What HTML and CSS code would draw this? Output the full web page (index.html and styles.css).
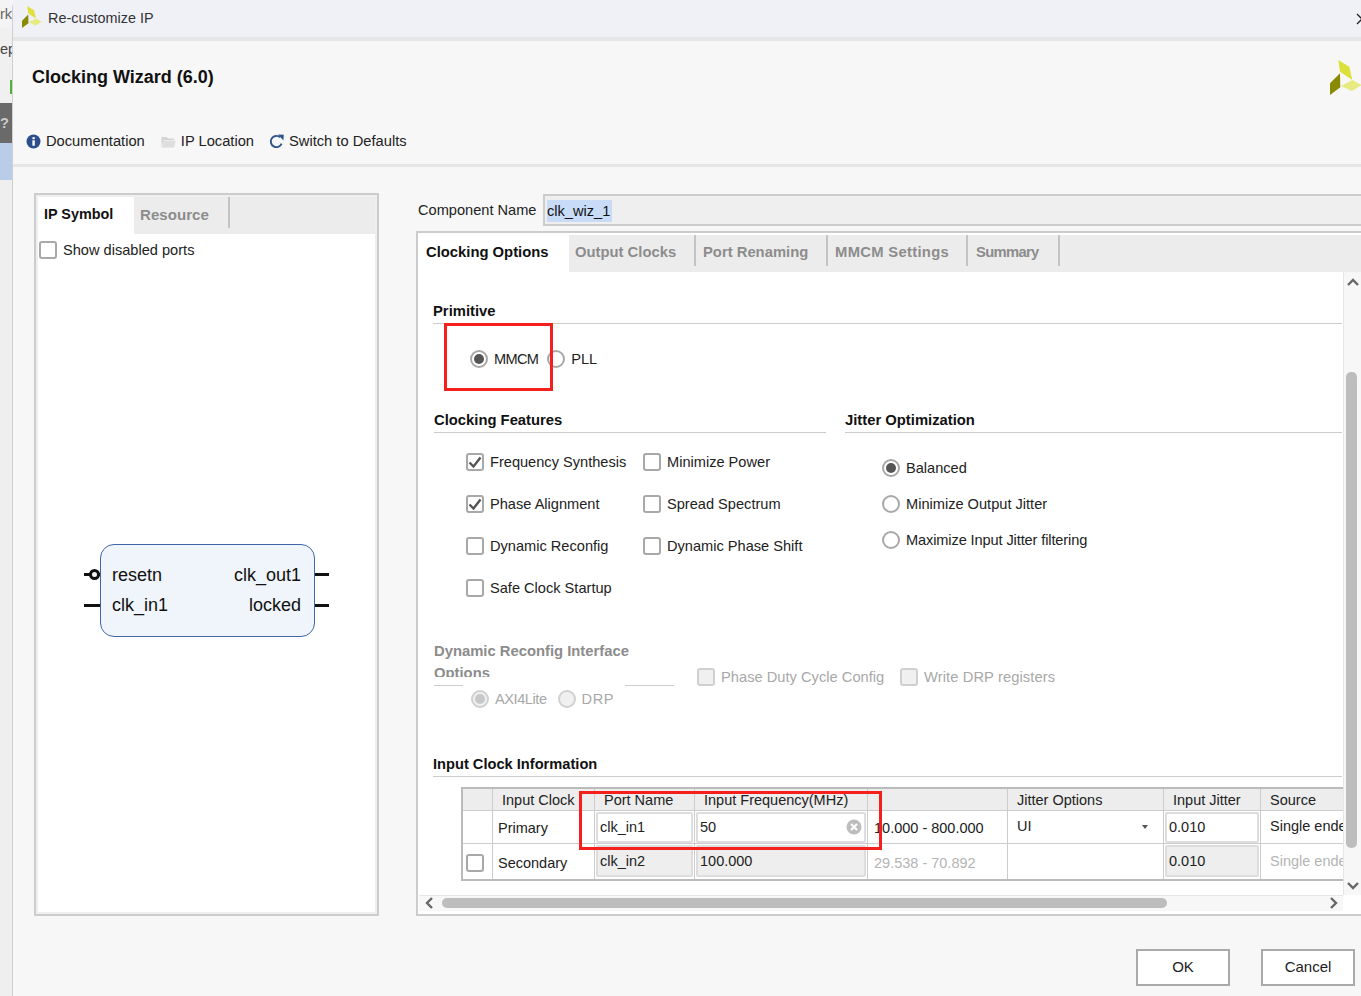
FILE: index.html
```html
<!DOCTYPE html>
<html lang="en">
<head>
<meta charset="utf-8">
<title>Re-customize IP</title>
<link rel="stylesheet" href="styles.css">
</head>
<body>
<aside class="backdrop">
  <div class="bd-a">rk</div>
  <div class="bd-b">ep<span class="bd-green"></span></div>
  <div class="bd-c">?</div>
  <div class="bd-d"></div>
</aside>
<main class="dialog">
  <div class="titlebar">
    <svg class="logo-small" viewBox="0 0 32 35"><polygon points="8.3,0 19.3,6.7 22.3,20 10,11.7" fill="#e0e040"/><polygon points="0,23.3 10,13.3 10.3,27.3 0,35" fill="#8a8a00"/><polygon points="11,26 22.3,20 31.7,25 21.7,31" fill="#e6ea80"/></svg>
    <span class="titlebar-text">Re-customize IP</span>
    <svg class="close" viewBox="0 0 12 12"><path d="M1 1 L11 11 M11 1 L1 11" stroke="#222" stroke-width="1.3" fill="none"/></svg>
  </div>
  <header class="header">
    <div class="header-top">
      <h1 class="wizard-title">Clocking Wizard (6.0)</h1>
      <svg class="logo-big" viewBox="0 0 32 35"><polygon points="8.3,0 19.3,6.7 22.3,20 10,11.7" fill="#dbe03a"/><polygon points="0,23.3 10,13.3 10.3,27.3 0,35" fill="#8a8a00"/><polygon points="11,26 22.3,20 31.7,25 21.7,31" fill="#e6ea80"/></svg>
    </div>
    <nav class="toolbar">
      <a class="tool tool-doc"><svg class="tool-icon" viewBox="0 0 15 15"><circle cx="7.5" cy="7.5" r="7" fill="#2c4f8c"/><rect x="6.4" y="6.3" width="2.4" height="5.4" fill="#fff"/><rect x="6.4" y="3.2" width="2.4" height="2" fill="#fff"/></svg>Documentation</a>
      <a class="tool tool-loc"><svg class="tool-icon" viewBox="0 0 15 15"><path d="M0.5 3 H5.5 L7 4.5 H13 V6 H3 L0.5 13 Z" fill="#d4d4d4"/><path d="M3.2 6.5 H14.8 L13 13.5 H0.8 Z" fill="#dedede"/></svg>IP Location</a>
      <a class="tool"><svg class="tool-icon" viewBox="0 0 15 15"><path d="M12.6 9.6 A5.6 5.6 0 1 1 11.2 3.4" stroke="#2f5488" stroke-width="1.9" fill="none"/><polygon points="9,0.5 14.8,0.8 14.4,6.6" fill="#2f5488"/></svg>Switch to Defaults</a>
    </nav>
  </header>
  <div class="workspace">
    <section class="left-panel">
      <div class="tabbar">
        <div class="tab tab-active tab-symbol">IP Symbol</div>
        <div class="tab tab-resource">Resource</div>
      </div>
      <div class="left-body">
        <label class="check-row show-ports"><span class="check"></span>Show disabled ports</label>
        <div class="symbol">
          <span class="pin pin-l pin-1"></span><span class="bubble"></span>
          <span class="pin pin-l pin-2"></span>
          <span class="pin pin-r pin-1"></span>
          <span class="pin pin-r pin-2"></span>
          <div class="sym-row"><span>resetn</span><span>clk_out1</span></div>
          <div class="sym-row"><span>clk_in1</span><span>locked</span></div>
        </div>
      </div>
    </section>
    <section class="right-panel">
      <div class="component-row">
        <span class="component-label">Component Name</span>
        <div class="component-input"><span class="selected">clk_wiz_1</span></div>
      </div>
      <div class="config">
        <div class="tabbar config-tabs">
          <div class="tab tab-active tab-c1">Clocking Options</div>
          <div class="tab tab-c2">Output Clocks</div>
          <div class="tab tab-c3">Port Renaming</div>
          <div class="tab tab-c3b">MMCM Settings</div>
          <div class="tab tab-c4">Summary</div>
        </div>
        <div class="scroll-wrap">
          <div class="content">
            <h2 class="section-title primitive-title">Primitive</h2>
            <div class="primitive-options">
              <label class="check-row mmcm"><span class="radio radio-on"></span><span class="tight">MMCM</span></label>
              <label class="check-row"><span class="radio"></span>PLL</label>
            </div>
            <div class="features">
              <div class="features-left">
                <h2 class="section-title">Clocking Features</h2>
                <div class="feature-grid">
                  <label class="check-row"><span class="check check-on"><svg viewBox="0 0 14 14"><path d="M1.5 7.5 L5.5 11.5 L12.5 2.5" stroke="#555" stroke-width="2.4" fill="none"/></svg></span>Frequency Synthesis</label>
                  <label class="check-row"><span class="check"></span>Minimize Power</label>
                  <label class="check-row"><span class="check check-on"><svg viewBox="0 0 14 14"><path d="M1.5 7.5 L5.5 11.5 L12.5 2.5" stroke="#555" stroke-width="2.4" fill="none"/></svg></span>Phase Alignment</label>
                  <label class="check-row"><span class="check"></span>Spread Spectrum</label>
                  <label class="check-row"><span class="check"></span>Dynamic Reconfig</label>
                  <label class="check-row"><span class="check"></span>Dynamic Phase Shift</label>
                  <label class="check-row"><span class="check"></span>Safe Clock Startup</label>
                </div>
              </div>
              <div class="features-right">
                <h2 class="section-title">Jitter Optimization</h2>
                <div class="jitter-list">
                  <label class="check-row"><span class="radio radio-on"></span>Balanced</label>
                  <label class="check-row"><span class="radio"></span>Minimize Output Jitter</label>
                  <label class="check-row"><span class="radio"></span><span class="snug">Maximize Input Jitter filtering</span></label>
                </div>
              </div>
            </div>
            <div class="dynamic">
              <div class="dynamic-left">
                <div class="dynamic-title">Dynamic Reconfig Interface Options</div>
                <div class="dynamic-rule"><span class="rule-a"></span><span class="rule-b"></span></div>
                <div class="dynamic-radios">
                  <label class="check-row disabled axi"><span class="radio radio-on radio-off"></span><span class="axi-label">AXI4Lite</span></label>
                  <label class="check-row disabled"><span class="radio radio-off"></span><span class="wide">DRP</span></label>
                </div>
              </div>
              <div class="dynamic-right">
                <label class="check-row disabled phase"><span class="check check-off"></span>Phase Duty Cycle Config</label>
                <label class="check-row disabled"><span class="check check-off"></span><span class="write">Write DRP registers</span></label>
              </div>
            </div>
            <h2 class="section-title input-title">Input Clock Information</h2>
            <div class="table-wrap">
              <table class="clock-table">
                <colgroup>
                  <col class="c1"><col class="c2"><col class="c3"><col class="c4"><col class="c5"><col class="c6"><col class="c7"><col class="c8">
                </colgroup>
                <tr class="head">
                  <th></th><th>Input Clock</th><th>Port Name</th><th>Input Frequency(MHz)</th><th></th><th>Jitter Options</th><th>Input Jitter</th><th>Source</th>
                </tr>
                <tr class="row-1">
                  <td></td><td class="name">Primary</td>
                  <td class="boxed"><div class="field">clk_in1</div></td>
                  <td class="boxed"><div class="field field-freq">50<svg class="clear" viewBox="0 0 16 16"><circle cx="8" cy="8" r="7.5" fill="#bdbdbd"/><path d="M5 5 L11 11 M11 5 L5 11" stroke="#fff" stroke-width="2"/></svg></div></td>
                  <td class="range">10.000 - 800.000</td>
                  <td class="jitter-opt">UI<span class="caret"></span></td>
                  <td class="boxed"><div class="field">0.010</div></td>
                  <td class="source">Single ended clock capable pin</td>
                </tr>
                <tr class="row-2">
                  <td class="chk"><span class="check"></span></td><td class="name">Secondary</td>
                  <td class="boxed"><div class="field field-off">clk_in2</div></td>
                  <td class="boxed"><div class="field field-off">100.000</div></td>
                  <td class="range range-off">29.538 - 70.892</td>
                  <td></td>
                  <td class="boxed"><div class="field field-off">0.010</div></td>
                  <td class="source source-off">Single ended clock capable pin</td>
                </tr>
              </table>
            </div>
            <div class="redbox redbox-a"></div>
            <div class="redbox redbox-b"></div>
          </div>
          <div class="vscroll">
            <svg class="chev" viewBox="0 0 12 8"><path d="M1 7 L6 2 L11 7" stroke="#666" stroke-width="2.4" fill="none"/></svg>
            <div class="vtrack"><div class="vthumb"></div></div>
            <svg class="chev" viewBox="0 0 12 8"><path d="M1 1 L6 6 L11 1" stroke="#666" stroke-width="2.4" fill="none"/></svg>
          </div>
        </div>
        <div class="hscroll">
          <svg class="chev-h" viewBox="0 0 8 12"><path d="M7 1 L2 6 L7 11" stroke="#666" stroke-width="2.4" fill="none"/></svg>
          <div class="hthumb"></div>
          <svg class="chev-h chev-r" viewBox="0 0 8 12"><path d="M1 1 L6 6 L1 11" stroke="#666" stroke-width="2.4" fill="none"/></svg>
        </div>
      </div>
    </section>
  </div>
  <footer class="footer">
    <button class="btn">OK</button>
    <button class="btn">Cancel</button>
  </footer>
</main>
</body>
</html>
```

FILE: styles.css
```css
* { box-sizing: border-box; }
html, body { margin: 0; height: 996px; overflow: hidden; }
body { display: flex; width: 1361px; font-family: "Liberation Sans", Arial, sans-serif; font-size: 14.6px; color: #222; background: #f7f7f7; }

.backdrop { width: 12px; flex: none; display: flex; flex-direction: column; overflow: hidden; background: #efefef; color: #666; white-space: nowrap; }
.bd-a { height: 28px; line-height: 28px; background: #f4f4f4; }
.bd-b { height: 75px; padding-top: 12px; line-height: 18px; background: #f0f0f0; position: relative; color: #444; }
.bd-green { position: absolute; left: 10px; top: 52px; width: 2px; height: 14px; background: #56b03a; }
.bd-c { height: 40px; background: #6a6a6a; color: #ccc; font-weight: bold; line-height: 40px; }
.bd-d { height: 37px; background: #b9cce8; }

.dialog { flex: 1; min-width: 0; display: flex; flex-direction: column; border-left: 1px solid #cfcfcf; border-top-left-radius: 8px; background: #f7f7f7; }

.titlebar { height: 41px; flex: none; display: flex; align-items: center; padding: 0 0 4px 9px; background: #f0f1f7; border-bottom: 4px solid #e6e6e6; position: relative; }
.logo-small { width: 20px; height: 22px; margin-right: 6px; }
.titlebar-text { font-size: 14.4px; color: #333; padding-top: 2px; }
.close { position: absolute; right: -7px; top: 13px; width: 12px; height: 12px; }

.header { height: 126px; flex: none; padding: 25px 0 0 19px; border-bottom: 3px solid #e6e6e6; }
.header-top { height: 22px; position: relative; }
.wizard-title { margin: 0; font-size: 18px; line-height: 22px; color: #111; }
.logo-big { position: absolute; right: -1px; top: -6px; width: 32px; height: 35px; }
.toolbar { display: flex; margin-top: 43px; margin-left: -6px; height: 20px; align-items: center; color: #222; font-size: 14.7px; }
.tool { display: flex; align-items: center; }
.tool-icon { width: 15px; height: 15px; margin-right: 5px; }
.tool-doc { margin-right: 16px; }
.tool-loc { margin-right: 15px; }

.workspace { flex: 1; min-height: 0; display: flex; padding: 26px 0 0 21px; }

.left-panel { width: 345px; height: 723px; flex: none; border: 2px solid #ccc; padding: 2px; display: flex; flex-direction: column; background: #efefef; }
.tabbar { display: flex; height: 37px; flex: none; background: #ececec; }
.tab { font-weight: bold; font-size: 14.8px; color: #8c8c8c; line-height: 35px; padding-left: 6px; position: relative; }
.tab-active { background: #fff; color: #111; padding-left: 6px; }
.tab-symbol { width: 96px; font-size: 14.4px; }
.tab-resource { width: 96px; font-size: 15.1px; }
.tab-resource::after, .tab-c2::after, .tab-c3::after, .tab-c3b::after, .tab-c4::after { content: ""; position: absolute; right: 0; top: 0; height: 31px; width: 2px; background: #c4c4c4; }
.left-body { flex: 1; background: #fff; padding: 6px 0 0 1px; }

.check-row { display: inline-flex; align-items: center; height: 20px; white-space: nowrap; color: #222; }
.tight { letter-spacing: -0.7px; }
.snug { letter-spacing: -0.12px; }
.axi-label { letter-spacing: -0.45px; }
.wide { letter-spacing: 0.6px; }
.write { letter-spacing: 0.1px; }
.check { width: 18px; height: 18px; flex: none; border: 2px solid #a8a8a8; border-radius: 3px; background: #fff; margin-right: 6px; display: inline-block; }
.check svg { display: block; width: 14px; height: 14px; }
.radio { width: 18px; height: 18px; flex: none; border: 2px solid #a8a8a8; border-radius: 50%; background: #fff; margin-right: 6px; display: inline-flex; align-items: center; justify-content: center; }
.radio-on::before { content: ""; width: 10px; height: 10px; border-radius: 50%; background: #555; }
.disabled { color: #a8a8a8; }
.check-off, .radio-off { border-color: #d0d0d0; background: #f0f0f0; }
.radio-off::before { background: #c8c8c8; }

.symbol { position: relative; width: 215px; height: 93px; margin: 282px 0 0 61px; padding: 20px 13px 0 11px; border: 1px solid #3f66a8; border-radius: 14px; background: #f0f4fb; font-size: 18px; color: #111; }
.sym-row { display: flex; justify-content: space-between; height: 30px; line-height: 20px; }
.pin { position: absolute; height: 3px; width: 16px; background: #111; }
.pin-1 { top: 28px; }
.pin-2 { top: 59px; }
.pin-l { left: -17px; }
.pin-r { right: -15px; width: 14px; }
.bubble { position: absolute; left: -12px; top: 24px; width: 11px; height: 11px; border: 3px solid #111; border-radius: 50%; background: #f7f7f7; }

.right-panel { flex: 1; min-width: 0; margin-left: 37px; display: flex; flex-direction: column; }
.component-row { display: flex; align-items: center; height: 32px; margin-top: 1px; padding-left: 2px; }
.component-label { width: 125px; flex: none; color: #222; }
.component-input { flex: 1; height: 32px; padding: 4px 2px; background: #efefef; border: 2px solid #ccc; border-right: 0; }
.selected { background: #c8dcf8; display: inline-block; height: 22px; line-height: 22px; padding: 0 2px 0 0; color: #111; }

.config { height: 685px; margin-top: 5px; border-top: 2px solid #ccc; border-left: 2px solid #ccc; border-bottom: 2px solid #ccc; padding: 2px 0 0 1px; background: #fff; display: flex; flex-direction: column; }
.tab-c1 { width: 150px; padding-left: 7px; }
.tab-c2 { width: 127px; }
.tab-c3 { width: 132px; padding-left: 7px; }
.tab-c3b { width: 140px; padding-left: 7px; letter-spacing: 0.3px; }
.tab-c4 { width: 92px; padding-left: 8px; letter-spacing: -0.7px; }
.config-tabs { flex: none; }

.scroll-wrap { height: 623px; flex: none; display: flex; }
.content { position: relative; width: 924px; flex: none; overflow: hidden; background: #fff; }
.section-title { margin: 0; height: 25px; font-size: 14.8px; line-height: 24px; font-weight: bold; color: #111; border-bottom: 1px solid #ccc; }
.primitive-title { margin: 27px 1px 0 14px; }
.primitive-options { height: 84px; padding: 25px 0 0 51px; display: flex; align-items: flex-start; }
.mmcm { margin-right: 9px; }
.features { height: 232px; display: grid; grid-template-columns: 392px 497px; column-gap: 19px; margin-left: 15px; }
.feature-grid { display: grid; grid-template-columns: 177px 1fr; grid-auto-rows: 42px; padding: 8px 0 0 32px; align-items: center; }
.jitter-list { display: grid; grid-auto-rows: 36px; padding: 17px 0 0 37px; align-items: center; justify-items: start; }
.dynamic { height: 112px; display: flex; margin-left: 15px; }
.dynamic-left { width: 263px; flex: none; }
.dynamic-title { width: 240px; height: 37px; overflow: hidden; font-weight: bold; font-size: 14.8px; color: #8c8c8c; line-height: 22px; padding-right: 40px; }
.dynamic-rule { display: flex; justify-content: space-between; width: 240px; height: 1px; margin-top: 8px; }
.rule-a { width: 29px; border-top: 1px solid #ccc; }
.rule-b { width: 49px; border-top: 1px solid #ccc; }
.dynamic-radios { display: flex; padding: 3px 0 0 37px; }
.axi { margin-right: 11px; }
.dynamic-right { display: flex; padding-top: 27px; align-items: flex-start; font-size: 14.7px; }
.phase { width: 203px; }

.section-title.input-title { margin: 0 1px 0 14px; font-size: 14.65px; }
.table-wrap { width: 882px; margin: 10px 0 0 42px; overflow: hidden; }
.clock-table { table-layout: fixed; width: 1040px; border-collapse: separate; border-spacing: 0; border-top: 2px solid #bbb; border-left: 2px solid #bbb; border-bottom: 2px solid #bbb; font-size: 14.5px; }
.c1 { width: 30px; }
.c2 { width: 102px; }
.c3 { width: 100px; }
.c4 { width: 173px; }
.c5 { width: 140px; }
.c6 { width: 156px; }
.c7 { width: 97px; }
.c8 { width: 240px; }
.clock-table th, .clock-table td { padding: 0; border-right: 1px solid #ccc; border-bottom: 1px solid #ccc; overflow: hidden; white-space: nowrap; }
.clock-table tr:last-child td { border-bottom: 0; }
.clock-table th { height: 22px; background: #ededed; font-weight: normal; text-align: left; padding-left: 9px; color: #222; line-height: 19px; padding-top: 2px; }
.clock-table th:first-child { padding: 0; }
.row-1 td { height: 33px; padding-top: 2px; }
.row-2 td { height: 35px; padding-top: 2px; }
.name { padding-left: 5px !important; }
.chk { padding-left: 3px !important; }
.chk .check { display: block; margin: 0; }
.boxed { padding: 1px 1px 0 !important; vertical-align: top; }
.field { height: 31px; border: 2px solid #ddd; border-radius: 2px; background: #fff; padding-left: 2px; line-height: 26px; color: #222; position: relative; }
.field-off { background: #eee; height: 32px; line-height: 29px; }
.clear { position: absolute; right: 2px; top: 5px; width: 16px; height: 16px; }
.range { padding-left: 6px !important; }
.range-off, .source-off { color: #b4b4b4; }
.jitter-opt { padding: 0 0 2px 9px !important; position: relative; }
.caret { position: absolute; left: 134px; top: 14px; border: 3px solid transparent; border-top: 4px solid #555; border-bottom: 0; }
.source { padding: 0 0 2px 9px !important; }

.redbox { position: absolute; border: 3px solid #f5201c; pointer-events: none; }
.redbox-a { left: 25px; top: 51px; width: 109px; height: 68px; }
.redbox-b { left: 160px; top: 519px; width: 303px; height: 59px; }

.vscroll { flex: 1; display: flex; flex-direction: column; align-items: center; background: #f7f7f7; border-left: 1px solid #e6e6e6; padding-top: 6px; }
.chev { width: 12px; height: 8px; flex: none; }
.vtrack { height: 596px; width: 100%; flex: none; padding: 86px 0 0 2px; }
.vthumb { width: 11px; height: 476px; border-radius: 5px; background: #bdbdbd; }
.hscroll { height: 16px; flex: none; display: flex; align-items: center; background: #f7f7f7; border-top: 1px solid #e6e6e6; position: relative; padding: 0 0 2px 3px; width: 924px; }
.chev-h { width: 8px; height: 12px; flex: none; margin-left: 3px; }
.hthumb { width: 725px; height: 10px; margin-left: 9px; border-radius: 5px; background: #bdbdbd; }
.chev-r { margin-left: 163px; }

.footer { height: 80px; flex: none; display: flex; justify-content: flex-end; gap: 31px; padding: 33px 6px 0 0; }
.btn { width: 94px; height: 37px; border: 2px solid #aaa; background: #fff; font: 15px "Liberation Sans", Arial, sans-serif; color: #222; padding: 0 0 2px; }
```
